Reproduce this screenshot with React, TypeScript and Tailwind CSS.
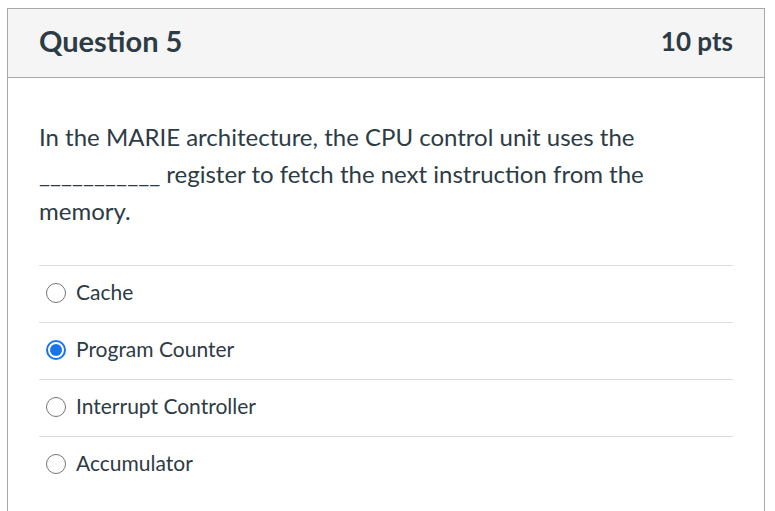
const options = [
  { id: "a", label: "Cache", checked: false },
  { id: "b", label: "Program Counter", checked: true },
  { id: "c", label: "Interrupt Controller", checked: false },
  { id: "d", label: "Accumulator", checked: false },
];

function Radio({ checked }: { checked: boolean }) {
  if (checked) {
    return (
      <span className="flex h-[20px] w-[20px] shrink-0 items-center justify-center rounded-full border-[2px] border-[#1a73e8] bg-white">
        <span className="h-[12px] w-[12px] rounded-full bg-[#1a73e8]" />
      </span>
    );
  }
  return <span className="h-[20px] w-[20px] shrink-0 rounded-full border border-[#767676] bg-white" />;
}

export default function App() {
  return (
    <div className="flex h-screen flex-col overflow-hidden bg-white pl-[7px] pr-[10px] pt-[8px] font-['Lato',sans-serif] text-[#2d3b45]">
      <div className="flex-1 border border-b-0 border-[#a8a8a8]">
        <div className="flex h-[69px] items-center justify-between border-b border-[#a8a8a8] bg-[#f5f5f5] px-[31px] pb-[6px]">
          <h2 className="text-[29px] font-bold leading-none">Question 5</h2>
          <span className="pt-[2px] text-[26px] font-bold leading-none">10 pts</span>
        </div>
        <div className="px-[31px] pt-[40px] pb-[20px]">
          <p className="text-[24px] leading-[37px]">
            In the MARIE architecture, the CPU control unit uses the ___________ register to fetch the next instruction
            from the memory.
          </p>
          <div className="mt-[36px]">
            {options.map((o) => (
              <label key={o.id} className="flex h-[57px] items-center gap-[10px] border-t border-[#dcdcdc] pb-[3px] pl-[7px]">
                <Radio checked={o.checked} />
                <span className="pb-[2px] text-[21px] leading-none">{o.label}</span>
              </label>
            ))}
          </div>
        </div>
      </div>
    </div>
  );
}
